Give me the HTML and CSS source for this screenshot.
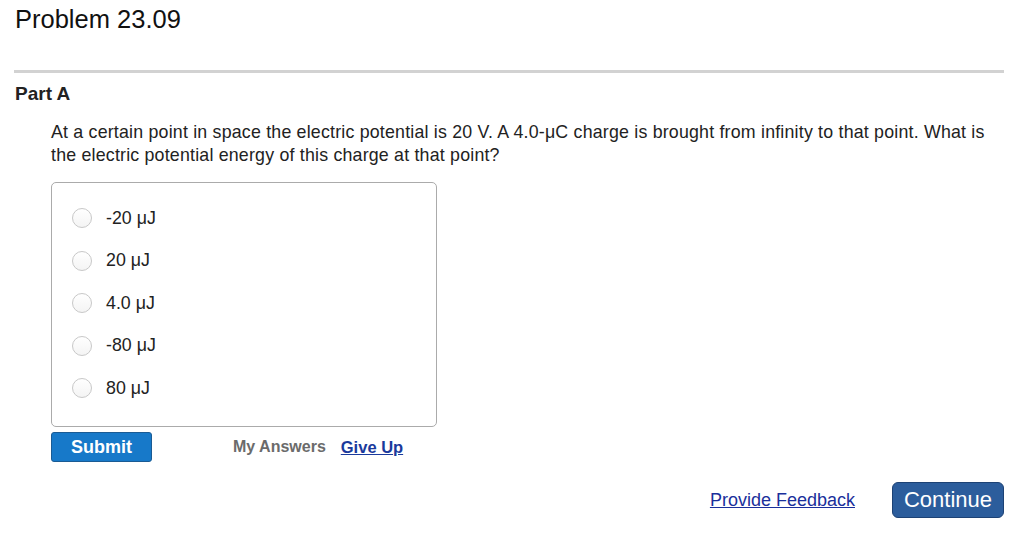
FILE: index.html
```html
<!DOCTYPE html>
<html>
<head>
<meta charset="utf-8">
<link rel="stylesheet" href="styles.css">
</head>
<body>
<div class="page">
  <h1 class="title">Problem 23.09</h1>
  <div class="rule"></div>
  <h2 class="part-title">Part A</h2>
  <div class="part-body">
    <p class="question">At a certain point in space the electric potential is 20 V. A 4.0-μC charge is brought from infinity to that point. What is the electric potential energy of this charge at that point?</p>
    <div class="choices">
      <label class="choice"><span class="radio"></span><span class="choice-text">-20 μJ</span></label>
      <label class="choice"><span class="radio"></span><span class="choice-text">20 μJ</span></label>
      <label class="choice"><span class="radio"></span><span class="choice-text">4.0 μJ</span></label>
      <label class="choice"><span class="radio"></span><span class="choice-text">-80 μJ</span></label>
      <label class="choice"><span class="radio"></span><span class="choice-text">80 μJ</span></label>
    </div>
    <div class="actions">
      <button class="submit">Submit</button>
      <span class="my-answers">My Answers</span>
      <a class="give-up" href="#">Give Up</a>
    </div>
  </div>
  <div class="footer">
    <a class="feedback" href="#">Provide Feedback</a>
    <button class="continue">Continue</button>
  </div>
</div>
</body>
</html>
```

FILE: styles.css
```css
* { box-sizing: border-box; }
html, body { margin: 0; padding: 0; background: #fff; }
body { font-family: "Liberation Sans", Arial, sans-serif; color: #222; }

.page { padding: 5px 20px 0 14px; width: 1024px; }

.title {
  margin: 0;
  padding-left: 1px;
  font-size: 25.5px;
  font-weight: normal;
  line-height: 29px;
  color: #111;
}

.rule {
  margin-top: 36px;
  height: 3px;
  background: #d2d2d2;
}

.part-title {
  margin: 9px 0 0 1px;
  font-size: 19px;
  font-weight: bold;
  line-height: 24px;
  color: #222;
}

.part-body { padding-left: 37px; }

.question {
  margin: 15px 0 0 0;
  font-size: 17.8px;
  letter-spacing: 0.2px;
  line-height: 23px;
  color: #222;
  width: 945px;
}

.choices {
  margin-top: 15px;
  width: 386px;
  height: 245px;
  border: 1px solid #ababab;
  border-radius: 5px;
  padding: 25px 0 0 20px;
  display: flex;
  flex-direction: column;
  gap: 22.5px;
}

.choice {
  display: flex;
  align-items: center;
  height: 20px;
}

.radio {
  width: 20px;
  height: 20px;
  border-radius: 50%;
  border: 1px solid #c8c8c8;
  background: linear-gradient(#fff, #f4f4f4);
  flex: none;
}

.choice-text {
  margin-left: 14px;
  font-size: 17.8px;
  color: #222;
}

.actions {
  margin-top: 5px;
  display: flex;
  align-items: center;
  height: 30px;
}

.submit {
  width: 101px;
  height: 30px;
  background: #1779c9;
  border: 1px solid #1a5b94;
  border-radius: 3px;
  color: #fff;
  font-family: "Liberation Sans", Arial, sans-serif;
  font-size: 18px;
  font-weight: bold;
  padding: 0;
}

.my-answers {
  margin-left: 81px;
  font-size: 16px;
  font-weight: bold;
  color: #6b6b6b;
}

.give-up {
  margin-left: 15px;
  font-size: 16.5px;
  font-weight: bold;
  color: #1a3a9c;
  text-decoration: underline;
}

.footer {
  margin-top: 20px;
  display: flex;
  justify-content: flex-end;
  align-items: center;
}

.feedback {
  font-size: 18px;
  color: #1a2f9b;
  text-decoration: underline;
  margin-right: 37px;
}

.continue {
  width: 112px;
  height: 36px;
  background: #2c5d9c;
  border: 1px solid #1d4275;
  border-radius: 6px;
  color: #fff;
  font-family: "Liberation Sans", Arial, sans-serif;
  font-size: 22px;
  padding: 0;
}
```
